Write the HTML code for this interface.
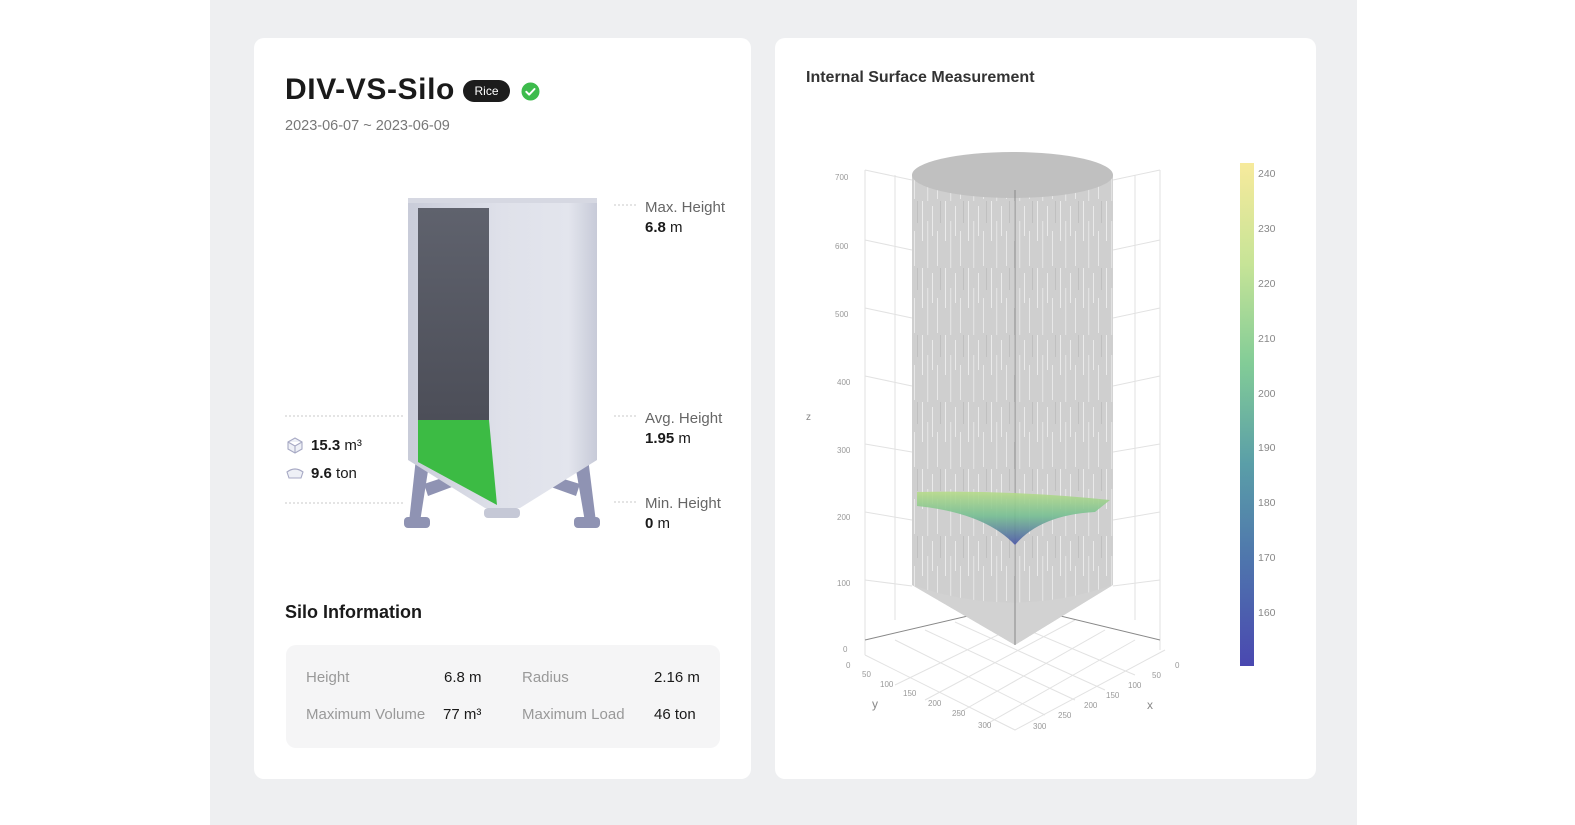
<!DOCTYPE html>
<html><head><meta charset="utf-8"><style>
*{margin:0;padding:0;box-sizing:border-box}
body{width:1575px;height:825px;background:#fff;position:relative;overflow:hidden;font-family:"Liberation Sans",sans-serif;color:#1a1a1a}
.bg{position:absolute;left:210px;top:0;width:1147px;height:825px;background:#eeeff1}
.card{position:absolute;background:#fff;border-radius:10px}
.a{position:absolute;white-space:nowrap}
.lbl{color:#666;font-size:15px}
.val{font-weight:bold;font-size:15px;color:#1a1a1a}
.g{color:#999;font-size:15px}
</style></head><body>
<div class="bg"></div>
<div class="card" style="left:254px;top:38px;width:497px;height:741px"></div>
<div class="card" style="left:775px;top:38px;width:541px;height:741px"></div>

<div class="a" style="left:285px;top:73px;font-size:30px;font-weight:bold;letter-spacing:0.6px">DIV-VS-Silo</div>
<div class="a" style="left:463px;top:80px;width:47px;height:22px;border-radius:11px;background:#1c1c1c;color:#fff;font-size:12px;text-align:center;line-height:22px">Rice</div>
<svg class="a" style="left:521px;top:82px" width="19" height="19" viewBox="0 0 19 19"><circle cx="9.5" cy="9.5" r="9" fill="#3dbb4c"/><path d="M5.3 9.8l2.9 2.8 5.3-5.6" stroke="#fff" stroke-width="2" fill="none" stroke-linecap="round" stroke-linejoin="round"/></svg>
<div class="a" style="left:285px;top:118px;font-size:14.5px;color:#777">2023-06-07 ~ 2023-06-09</div>

<svg class="a" style="left:0;top:0" width="1575" height="825">
<g stroke="#c8c8c8" stroke-dasharray="2 2" stroke-width="1">
<line x1="285" y1="416" x2="403" y2="416"/><line x1="285" y1="503" x2="403" y2="503"/>
<line x1="614" y1="205" x2="636" y2="205"/><line x1="614" y1="416" x2="636" y2="416"/><line x1="614" y1="502" x2="636" y2="502"/>
</g>
<g fill="#8f93b3">
<path d="M416 458 L430 458 L420 522 L409 522 Z"/><path d="M424 484 L472 468 L476 478 L428 496Z"/>
<path d="M574 458 L588 458 L596 522 L585 522 Z"/><path d="M528 468 L580 484 L576 496 L526 478Z"/>
<rect x="404" y="517" width="26" height="11" rx="4"/><rect x="574" y="517" width="26" height="11" rx="4"/>
</g>
<rect x="484" y="508" width="36" height="10" rx="4" fill="#c5c8d6"/>
<defs><linearGradient id="sg" x1="0" x2="1"><stop offset="0" stop-color="#c9ccd9"/><stop offset="0.5" stop-color="#dfe1ea"/><stop offset="0.85" stop-color="#e3e5ed"/><stop offset="1" stop-color="#c7cad8"/></linearGradient>
<linearGradient id="dg" x1="0" y1="0" x2="0" y2="1"><stop offset="0" stop-color="#5f626d"/><stop offset="1" stop-color="#4c4e58"/></linearGradient>
<linearGradient id="cb" x1="0" y1="1" x2="0" y2="0"><stop offset="0" stop-color="#4a48b0"/><stop offset="0.2" stop-color="#4e73ad"/><stop offset="0.4" stop-color="#5a9ea8"/><stop offset="0.6" stop-color="#82cc97"/><stop offset="0.8" stop-color="#c7e497"/><stop offset="1" stop-color="#f7ea9c"/></linearGradient>
<pattern id="st" width="23" height="67" patternUnits="userSpaceOnUse"><rect width="23" height="67" fill="#c6c6c6"/><rect x="2" y="0" width="1" height="40" fill="#e8e8e8"/><rect x="7" y="20" width="1.3" height="47" fill="#dcdcdc"/><rect x="12" y="5" width="0.8" height="30" fill="#efefef"/><rect x="17" y="30" width="1" height="35" fill="#e4e4e4"/><rect x="20" y="0" width="0.8" height="22" fill="#b0b0b0"/></pattern>
</defs>
<path d="M408 198 H597 V460 L520 508 H485 L408 460 Z" fill="url(#sg)"/>
<rect x="408" y="198" width="189" height="5" fill="#d6d8e2"/>
<rect x="418" y="208" width="71" height="212" fill="url(#dg)"/>
<path d="M418 420 H489 L497 505 L418 462 Z" fill="#3cbb44"/>

<g stroke="#e2e2e2" stroke-width="1" fill="none">
<line x1="865" y1="170" x2="865" y2="655"/><line x1="1160" y1="170" x2="1160" y2="650"/>
<line x1="895" y1="175" x2="895" y2="620"/><line x1="1135" y1="175" x2="1135" y2="620"/>
<path d="M865 170 L912 180 M1113 180 L1160 170 M865 240 L912 250 M1113 250 L1160 240 M865 308 L912 318 M1113 318 L1160 308 M865 376 L912 386 M1113 386 L1160 376 M865 444 L912 452 M1113 452 L1160 444 M865 512 L912 520 M1113 520 L1160 512 M865 580 L912 586 M1113 586 L1160 580"/>
<path d="M865 655 L1015 730 L1165 650 M895 640 L1045 715 M925 630 L1075 700 M955 622 L1105 690 M985 612 L1135 675 M1135 640 L985 725 M1105 630 L955 715 M1075 620 L925 700 M1045 612 L895 685"/>
</g>
<path d="M865 640 L1015 605 L1160 640" stroke="#888" fill="none"/>
<path d="M912 175 V585 L1015 645 L1113 585 V175 Z" fill="url(#st)" opacity="0.85"/>
<ellipse cx="1012.5" cy="175" rx="100.5" ry="23" fill="#c0c0c0"/>
<path d="M912 585 Q1012 620 1113 585 L1015 645Z" fill="#d2d2d2"/>
<line x1="1015" y1="190" x2="1015" y2="645" stroke="#888" stroke-width="1"/>
<defs><linearGradient id="sf" x1="0" y1="0" x2="0" y2="1"><stop offset="0" stop-color="#b8dc8a"/><stop offset="0.45" stop-color="#76bf92"/><stop offset="1" stop-color="#4a55a8"/></linearGradient></defs>
<path d="M917 492 Q1015 490 1110 500 L1095 512 Q1040 515 1015 545 Q985 513 917 506 Z" fill="url(#sf)" opacity="0.9"/>
<rect x="1240" y="163" width="14" height="503" fill="url(#cb)"/>
<g fill="#999" font-size="8" font-family="Liberation Sans">
<text x="835" y="180">700</text><text x="835" y="249">600</text><text x="835" y="317">500</text><text x="837" y="385">400</text><text x="837" y="453">300</text><text x="837" y="520">200</text><text x="837" y="586">100</text><text x="843" y="652">0</text><text x="846" y="668">0</text>
<text x="862" y="677">50</text><text x="880" y="687">100</text><text x="903" y="696">150</text><text x="928" y="706">200</text><text x="952" y="716">250</text><text x="978" y="728">300</text>
<text x="1175" y="668">0</text><text x="1152" y="678">50</text><text x="1128" y="688">100</text><text x="1106" y="698">150</text><text x="1084" y="708">200</text><text x="1058" y="718">250</text><text x="1033" y="729">300</text>
</g>
<text x="806" y="420" font-size="10" fill="#888">z</text>
<text x="872" y="708" font-size="12" fill="#888">y</text>
<text x="1147" y="709" font-size="12" fill="#888">x</text>
<g font-size="10.5" fill="#888"><text x="1258" y="177">240</text><text x="1258" y="232">230</text><text x="1258" y="287">220</text><text x="1258" y="342">210</text><text x="1258" y="397">200</text><text x="1258" y="451">190</text><text x="1258" y="506">180</text><text x="1258" y="561">170</text><text x="1258" y="616">160</text></g>
<path d="M288 442 L295 438 L302 442 V449 L295 453 L288 449Z M288 442 L295 446 L302 442 M295 446 V453" stroke="#a7a9c4" fill="#eef0f6" stroke-width="1.1"/>
<path d="M287 472 Q295 466 303 472 L301 478 H289Z" stroke="#a7a9c4" fill="#eef0f6" stroke-width="1.1"/>
</svg>

<div class="a val" style="left:311px;top:437px">15.3 <span style="font-weight:normal">m³</span></div>
<div class="a val" style="left:311px;top:465px">9.6 <span style="font-weight:normal">ton</span></div>
<div class="a lbl" style="left:645px;top:199px">Max. Height</div>
<div class="a val" style="left:645px;top:219px">6.8 <span style="font-weight:normal">m</span></div>
<div class="a lbl" style="left:645px;top:410px">Avg. Height</div>
<div class="a val" style="left:645px;top:430px">1.95 <span style="font-weight:normal">m</span></div>
<div class="a lbl" style="left:645px;top:495px">Min. Height</div>
<div class="a val" style="left:645px;top:515px">0 <span style="font-weight:normal">m</span></div>

<div class="a" style="left:285px;top:602px;font-size:18px;font-weight:bold">Silo Information</div>
<div class="a" style="left:286px;top:645px;width:434px;height:103px;background:#f5f5f6;border-radius:10px"></div>
<div class="a g" style="left:306px;top:669px">Height</div>
<div class="a" style="left:444px;top:669px;font-size:15px">6.8 m</div>
<div class="a g" style="left:522px;top:669px">Radius</div>
<div class="a" style="left:654px;top:669px;font-size:15px">2.16 m</div>
<div class="a g" style="left:306px;top:706px">Maximum Volume</div>
<div class="a" style="left:443px;top:706px;font-size:15px">77 m³</div>
<div class="a g" style="left:522px;top:706px">Maximum Load</div>
<div class="a" style="left:654px;top:706px;font-size:15px">46 ton</div>

<div class="a" style="left:806px;top:69px;font-size:16px;font-weight:bold;color:#333">Internal Surface Measurement</div>
</body></html>
